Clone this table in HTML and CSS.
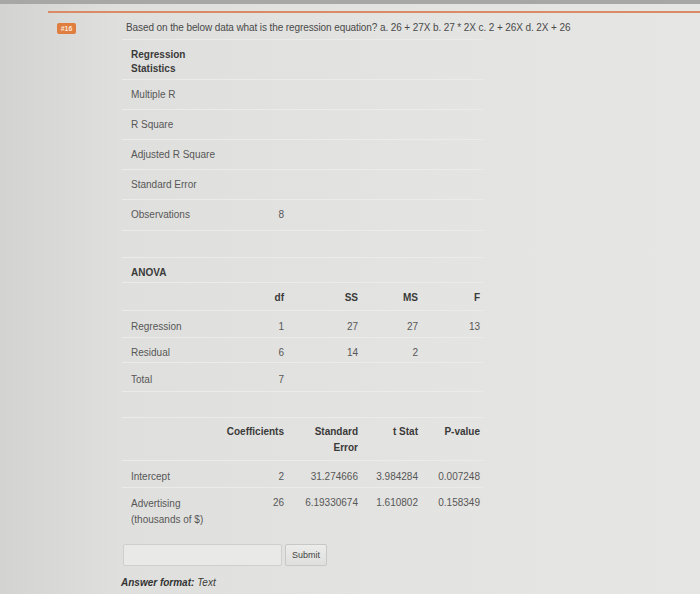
FILE: index.html
```html
<!DOCTYPE html>
<html lang="en">
<head>
<meta charset="utf-8">
<title>Question 16</title>
<link rel="stylesheet" href="styles.css">
</head>
<body>
<div class="topbar"></div>
<div class="page">
  <div class="question">
    <div class="gutter"><span class="badge">#16</span></div>
    <div class="content">
      <div class="prompt">Based on the below data what is the regression equation? a. 26 + 27X b. 27 * 2X c. 2 + 26X d. 2X + 26</div>

      <div class="grid">
        <div class="row r-stathead"><div class="c lbl hd">Regression<br>Statistics</div></div>
        <div class="row r30"><div class="c lbl">Multiple R</div></div>
        <div class="row r30"><div class="c lbl">R Square</div></div>
        <div class="row r30"><div class="c lbl">Adjusted R Square</div></div>
        <div class="row r30"><div class="c lbl">Standard Error</div></div>
        <div class="row r31"><div class="c lbl">Observations</div><div class="c num">8</div></div>
        <div class="row r27"></div>

        <div class="row r25 low"><div class="c lbl hd">ANOVA</div></div>
        <div class="row r28"><div class="c lbl"></div><div class="c num hd">df</div><div class="c num hd">SS</div><div class="c num hd">MS</div><div class="c num hd">F</div></div>
        <div class="row r27 low"><div class="c lbl">Regression</div><div class="c num">1</div><div class="c num">27</div><div class="c num">27</div><div class="c num">13</div></div>
        <div class="row r25 low"><div class="c lbl">Residual</div><div class="c num">6</div><div class="c num">14</div><div class="c num">2</div><div class="c num"></div></div>
        <div class="row r29 low"><div class="c lbl">Total</div><div class="c num">7</div></div>
        <div class="row r26"></div>

        <div class="row r-coefhead top"><div class="c lbl"></div><div class="c num hd">Coefficients</div><div class="c num hd two">Standard<br>Error</div><div class="c num hd">t Stat</div><div class="c num hd">P-value</div></div>
        <div class="row r27 low"><div class="c lbl">Intercept</div><div class="c num">2</div><div class="c num">31.274666</div><div class="c num">3.984284</div><div class="c num">0.007248</div></div>
        <div class="row r-last top"><div class="c lbl two">Advertising<br>(thousands of $)</div><div class="c num">26</div><div class="c num">6.19330674</div><div class="c num">1.610802</div><div class="c num">0.158349</div></div>
      </div>

      <form class="answer" onsubmit="return false">
        <input class="field" type="text" aria-label="Answer">
        <button class="submit" type="submit">Submit</button>
      </form>
      <p class="format"><b>Answer format:</b> Text</p>
    </div>
  </div>
</div>
</body>
</html>
```

FILE: styles.css
```css
* { box-sizing: border-box; }
html, body { margin: 0; padding: 0; }
body {
  width: 700px;
  height: 594px;
  overflow: hidden;
  font-family: "Liberation Sans", Arial, Helvetica, sans-serif;
  font-size: 10px;
  color: #505050;
  background: linear-gradient(to right, #d3d3d1 0px, #dfdfdd 120px, #e3e3e1 400px, #e6e6e4 700px);
}
.topbar {
  height: 4px;
  background: #a7a7a5;
}
.page {
  padding-top: 7px;
  padding-left: 48px;
}
.question {
  display: flex;
  border-top: 2px solid #d98a66;
}
.gutter {
  width: 74px;
  flex: none;
  padding-top: 9px;
  padding-left: 9px;
}
.badge {
  display: inline-block;
  width: 19px;
  height: 11px;
  line-height: 11px;
  border-radius: 2px;
  background: #e07e40;
  color: #fbe6d8;
  font-size: 7px;
  font-weight: bold;
  text-align: center;
}
.content {
  width: 480px;
}
.prompt {
  height: 27px;
  padding-top: 9px;
  padding-left: 4px;
  line-height: 12px;
  letter-spacing: -0.1px;
  white-space: nowrap;
  color: #4a4a4a;
  border-bottom: 1px solid #ebebe9;
  width: 361px;
  overflow: visible;
}
.grid {
  width: 361px;
}
.row {
  display: grid;
  grid-template-columns: 100px 65px 74px 60px 62px;
  align-items: center;
  border-bottom: 1px solid #ebebe9;
  line-height: 14px;
}
.row.top { align-items: start; }
.row.low { padding-top: 5px; }
.r-stathead { height: 40px; padding-top: 4px; }
.r30 { height: 30px; }
.r31 { height: 31px; }
.r29 { height: 29px; }
.r28 { height: 28px; padding-top: 2px; }
.r27 { height: 27px; }
.r26 { height: 26px; }
.r25 { height: 25px; }
.r-coefhead { height: 43px; padding-top: 6px; }
.r-last { height: 44px; border-bottom: none; padding-top: 8px; }
.two { line-height: 16px; }
.r-coefhead .num { line-height: 16px; }
.c {
  white-space: nowrap;
}
.lbl {
  padding-left: 9px;
  color: #575757;
}
.num {
  text-align: right;
  padding-right: 3px;
  color: #575757;
}
.hd {
  font-weight: bold;
  color: #3a3a3a;
}
.answer {
  display: flex;
  gap: 3px;
  margin: 12px 0 0 1px;
}
.field {
  width: 159px;
  height: 22px;
  margin: 0;
  border: 1px solid #cfcfcd;
  border-radius: 2px;
  background: #e9e9e7;
}
.submit {
  width: 42px;
  height: 22px;
  margin: 0;
  padding: 0;
  border: 1px solid #c8c8c6;
  border-radius: 2px;
  background: linear-gradient(#ececea, #dfdfdd);
  font-family: "Liberation Sans", Arial, sans-serif;
  font-size: 9px;
  color: #444;
}
.format {
  margin: 10px 0 0 -1px;
  line-height: 14px;
  font-style: italic;
  color: #3a3a3a;
}
.format b { color: #333; }
```
